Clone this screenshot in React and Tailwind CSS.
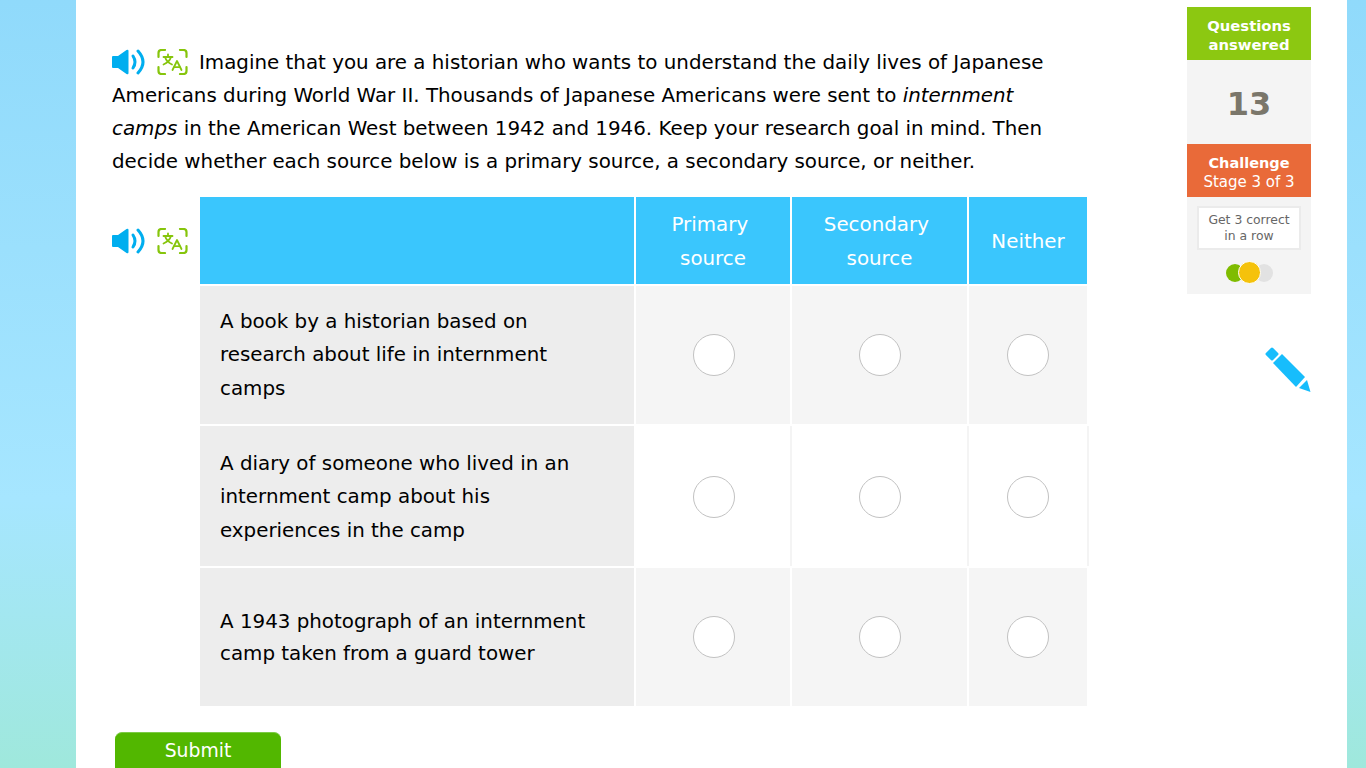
const rows = [
  { text: "A book by a historian based on research about life in internment camps", h: "h-[138px]", shade: true, text2: "leading-[33.5px]", cell: "" },
  { text: "A diary of someone who lived in an internment camp about his experiences in the camp", h: "h-[140px]", shade: false, text2: "leading-[33.5px] pt-[2px]", cell: "pt-[2px]" },
  { text: "A 1943 photograph of an internment camp taken from a guard tower", h: "h-[138px]", shade: true, text2: "leading-[32px] pt-[2px]", cell: "" },
];

function Speaker() {
  return (
    <svg width="33" height="26" viewBox="0 0 33 26" className="shrink-0">
      <path d="M0 8 Q0 7 1 7 L6 7 L14.5 1 Q16.5 0 16.5 2 V24 Q16.5 26 14.5 25 L6 19 L1 19 Q0 19 0 18 Z" fill="#00aeef" />
      <path d="M21 7 Q25 13 21 19" fill="none" stroke="#00aeef" strokeWidth="3" strokeLinecap="round" />
      <path d="M26 2 Q36 13 26 24" fill="none" stroke="#00aeef" strokeWidth="3" strokeLinecap="round" />
    </svg>
  );
}

function Translate() {
  return (
    <svg width="31" height="26" viewBox="0 0 31 26" className="shrink-0">
      <g fill="none" stroke="#86c50c" strokeLinecap="round" strokeLinejoin="round">
        <g strokeWidth="2.2">
          <path d="M1.5 8 V4 Q1.5 1 4.5 1 H8" />
          <path d="M23 1 H26.5 Q29.5 1 29.5 4 V8" />
          <path d="M29.5 18 V22 Q29.5 25 26.5 25 H23" />
          <path d="M8 25 H4.5 Q1.5 25 1.5 22 V18" />
        </g>
        <g strokeWidth="1.8">
          <path d="M6.5 8 H15.5" />
          <path d="M11 5.5 V8" />
          <path d="M8 8 Q9.5 13 15 15.5" />
          <path d="M14 8 Q12.5 13 6.5 15.5" />
          <path d="M15.5 21 L20 12 L24.5 21" />
          <path d="M17.3 18.2 H22.7" />
        </g>
      </g>
    </svg>
  );
}

function Pencil() {
  return (
    <svg width="47" height="47" viewBox="0 0 47 47" className="self-end mt-[52px]">
      <path d="M3 8 L8 3 L13 8 L8 13 Z" fill="#17bdfc" stroke="#17bdfc" strokeWidth="3" strokeLinejoin="round" />
      <path d="M9 17 L18 8 L41 31 L32 41 Z" fill="#17bdfc" />
      <path d="M35 42 L43 34 L46.5 46 Z" fill="#17bdfc" />
    </svg>
  );
}

function Radio() {
  return <span className="block w-[42px] h-[42px] rounded-full bg-white border-[1.3px] border-[#c2c2c2]" />;
}

function HeaderCell({ children }) {
  return (
    <div className="bg-[#3ac6fd] text-white text-center flex items-center justify-center leading-[34px] pt-[3px]">
      <span>{children}</span>
    </div>
  );
}

export default function App() {
  return (
    <div
      className="h-[768px] overflow-hidden bg-gradient-to-b from-[#90dafb] via-[#a6e6ff] via-65% to-[#9fe8dc] pl-[76px] pr-[19px] text-[19.85px] text-black"
      style={{ fontFamily: '"DejaVu Sans", Verdana, sans-serif' }}
    >
      <div className="h-full bg-white flex">
        <main className="w-[1075px] shrink-0 pl-[36px] pt-[45.5px]">
          <p className="w-[963px] leading-[33.2px]">
            <span className="inline-flex items-center gap-[12px] align-[-6px] mr-[11px]">
              <Speaker />
              <Translate />
            </span>
            Imagine that you are a historian who wants to understand the daily lives of Japanese Americans during World War II. Thousands of Japanese Americans were sent to <em>internment camps</em> in the American West between 1942 and 1946. Keep your research goal in mind. Then decide whether each source below is a primary source, a secondary source, or neither.
          </p>

          <div className="flex mt-[18.5px]">
            <div className="w-[88px] shrink-0 flex gap-[12px] pt-[31px]">
              <Speaker />
              <Translate />
            </div>
            <div className="w-[888px] shrink-0 grid grid-cols-[434px_154px_175px_118px] gap-[2px]">
              <div className="bg-[#3ac6fd] h-[87px]" />
              <HeaderCell>Primary{"\u00a0"}<br />source</HeaderCell>
              <HeaderCell>Secondary{"\u00a0"}<br />source</HeaderCell>
              <HeaderCell>Neither</HeaderCell>
              {rows.map((r) => (
                <div key={r.text} className="contents">
                  <div className={`${r.h} ${r.text2} bg-[#ededed] pl-[20px] pr-[34px] flex items-center`}>
                    <span>{r.text}</span>
                  </div>
                  {[0, 1, 2].map((i) => (
                    <div
                      key={i}
                      className={`${r.cell} ${i === 0 ? "pl-[2px]" : ""} ${r.shade ? "bg-[#f5f5f5] flex items-center justify-center" : "bg-white flex items-center justify-center shadow-[2px_0_0_#f4f4f4]"}`}
                    >
                      <Radio />
                    </div>
                  ))}
                </div>
              ))}
            </div>
          </div>

          <button className="block mt-[26px] ml-[3px] w-[166px] h-[50px] rounded-t-[7px] bg-[#52b700] border-t border-[#7ccb46] text-white text-[18.8px] pb-[13px]">
            Submit
          </button>
        </main>

        <aside className="ml-[36px] mt-[7px] w-[124px] shrink-0 flex flex-col">
          <div className="h-[53px] bg-[#8cc811] text-white font-bold text-[14.8px] leading-[19px] text-center pt-[9px]">
            Questions<br />answered
          </div>
          <div className="h-[84px] bg-[#f4f4f4] flex items-center justify-center font-bold text-[32px] text-[#7a766a] pt-[3px]">13</div>
          <div className="h-[53px] bg-[#e96a39] text-white text-[15px] leading-[19px] text-center pt-[10px]">
            <div className="font-bold text-[14.5px]">Challenge</div>
            <div>Stage 3 of 3</div>
          </div>
          <div className="h-[97px] bg-[#f4f4f4] flex flex-col items-center pt-[9px]">
            <div className="w-[104px] h-[44px] bg-white border-2 border-[#ebebeb] text-[12.4px] leading-[16px] text-[#666666] text-center pt-[4px]">
              Get 3 correct<br />in a row
            </div>
            <div className="flex items-center mt-[11px]">
              <span className="w-[18px] h-[18px] rounded-full bg-[#7fbc00]" />
              <span className="relative z-10 -mx-[6px] w-[23px] h-[23px] rounded-full bg-[#f5c20b] border border-white" />
              <span className="w-[18px] h-[18px] rounded-full bg-[#e2e2e2]" />
            </div>
          </div>
          <Pencil />
        </aside>
      </div>
    </div>
  );
}
